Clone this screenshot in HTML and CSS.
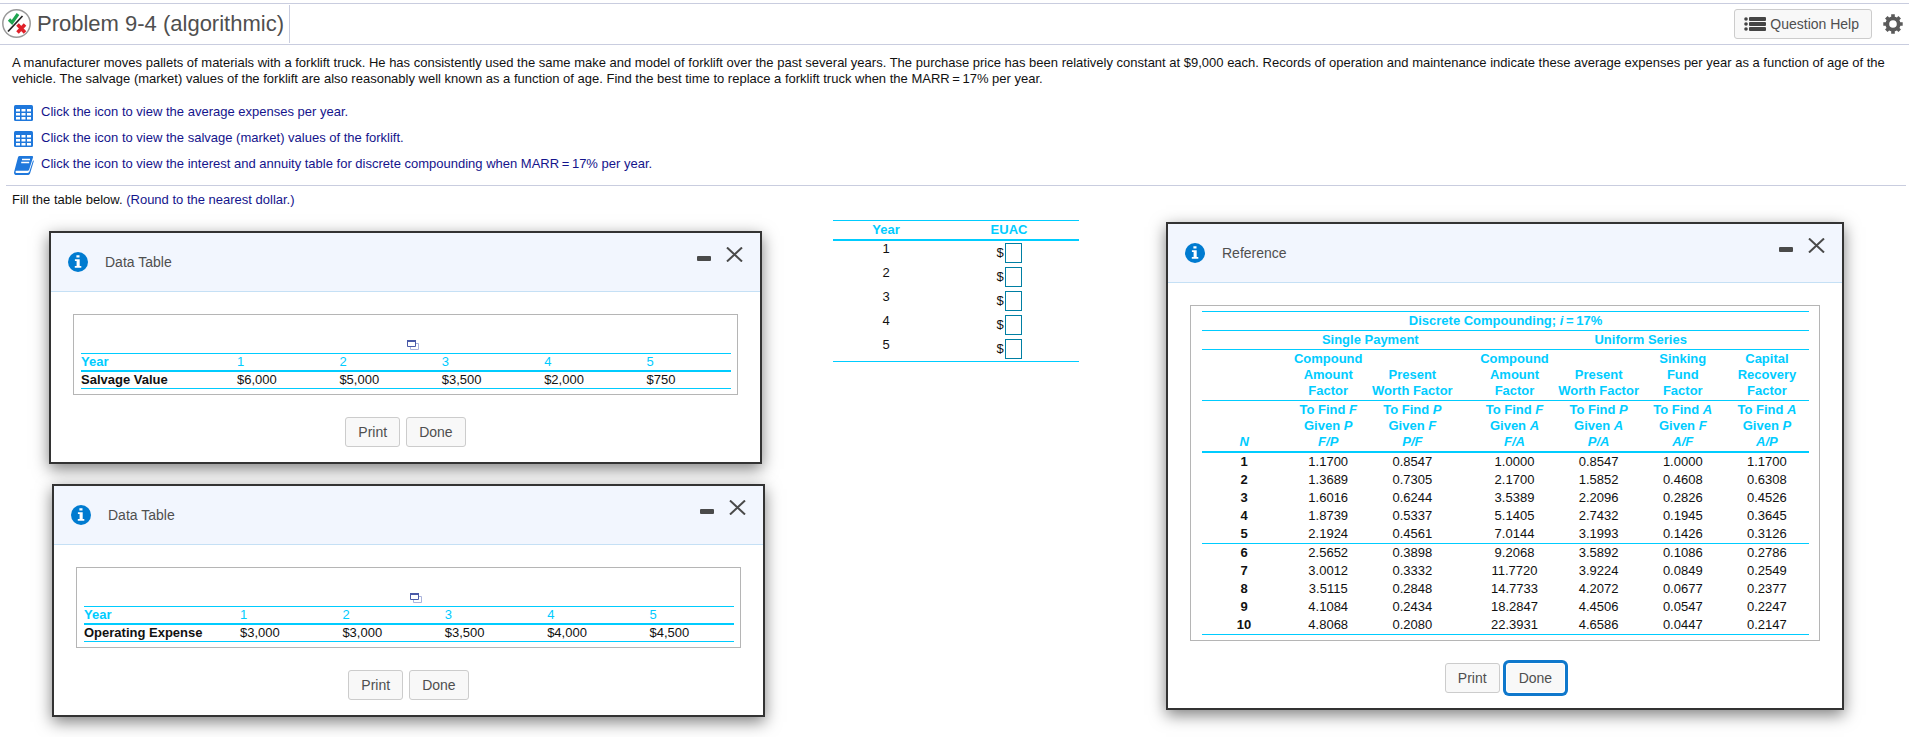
FILE: index.html
```
<!DOCTYPE html>
<html lang="en">
<head>
    <meta charset="UTF-8">
    <meta name="viewport" content="width=device-width, initial-scale=1.0">
    <title>Problem 9-4 (algorithmic)</title>
    <link rel="stylesheet" href="styles.css">
</head>
<body>
    <!-- shared icons -->
    <svg class="sprite" aria-hidden="true">
        <symbol id="icon-info" viewBox="0 0 20 20">
            <circle cx="10" cy="10" r="10" fill="#007bd0"/>
            <path fill="#fff" d="M8.4 3.2h3.1v2.4H8.4zM6.9 7.2h4.8v6.7h1.6v1.9H6.8v-1.9h1.8V9.1H6.9z"/>
        </symbol>
        <symbol id="icon-close" viewBox="0 0 17 15">
            <path d="M1 0.5L16 14.5M16 0.5L1 14.5" stroke="#4a4a4a" stroke-width="2" fill="none"/>
        </symbol>
        <symbol id="icon-popout" viewBox="0 0 12 10">
            <path d="M3.5 3.5h8v6h-8z" fill="#fff" stroke="#aab3dc"/>
            <path d="M0.5 0.5h8v6h-8z" fill="#fff" stroke="#4a5aa8"/>
            <path d="M0 0h9v2H0z" fill="#4a5aa8"/>
        </symbol>
        <symbol id="icon-table" viewBox="0 0 19 16">
            <rect width="19" height="16" rx="1.5" fill="#1f78dc"/>
            <path fill="#fff" d="M2 4h4v2.5H2zM7.5 4h4v2.5h-4zM13 4h4v2.5h-4zM2 8h4v2.5H2zM7.5 8h4v2.5h-4zM13 8h4v2.5h-4zM2 12h4v2.5H2zM7.5 12h4v2.5h-4zM13 12h4v2.5h-4z"/>
        </symbol>
        <symbol id="icon-book" viewBox="0 0 20 19">
            <path fill="#1f78dc" d="M5.6 0h12.2c1 0 1.5.6 1.2 1.5L15.2 13.5c-.3.8-1 1.3-1.8 1.3H2.8c-.8 0-1.3.4-1.3 1.1 0 .8.5 1.1 1.4 1.1h10.6c1 0 1.6-.5 1.900-1.4L19 4.5l.9.3-3.7 12.100c-.4 1.400-1.300 2.100-2.700 2.100H2.500C.9 19-.2 17.800.1 16.100L4 1.200C4.300.4 4.800 0 5.600 0z"/>
            <path d="M8 3.5h8M7.2 6.5h8" stroke="#fff" stroke-width="1.3"/>
        </symbol>
    </svg>

    <header class="topbar">
        <svg class="logo" viewBox="0 0 30 30" aria-hidden="true">
            <circle cx="14.5" cy="14.500" r="13.700" fill="#fff" stroke="#999" stroke-width="1.500"/>
            <path d="M6 22.500L20.500 7" stroke="#222" stroke-width="1.700"/>
            <path d="M7 10.500l3 3 6-8.500" fill="none" stroke="#1fa550" stroke-width="3.200"/>
            <path d="M15.500 15.500l7.500 8M23 15.500l-7.500 8" stroke="#e0202a" stroke-width="3.500"/>
        </svg>
        <h1 class="topbar-title">Problem 9-4 (algorithmic)</h1>
        <button class="btn help-button" type="button">
            <svg width="22" height="14" viewBox="0 0 22 14" fill="#444" aria-hidden="true">
                <circle cx="2" cy="2" r="1.8"/><circle cx="2" cy="7" r="1.8"/><circle cx="2" cy="12" r="1.8"/>
                <rect x="5" width="17" height="4" rx="1"/><rect x="5" y="5" width="17" height="4" rx="1"/><rect x="5" y="10" width="17" height="4" rx="1"/>
            </svg>
            Question Help
        </button>
        <button class="gear-button" type="button" aria-label="Settings">
            <svg width="20" height="20" viewBox="0 0 20 20" aria-hidden="true">
                <circle cx="10" cy="10" r="5.7" fill="none" stroke="#5a5a5a" stroke-width="3.8"/>
                <path stroke="#5a5a5a" stroke-width="3.6" d="M10 0.3v3M10 16.7v3M0.3 10h3M16.7 10h3M3.3 3.3l2 2M14.7 14.7l2 2M3.3 16.7l2-2M14.7 5.3l2-2"/>
            </svg>
        </button>
    </header>

    <section class="problem">
        <p>A manufacturer moves pallets of materials with a forklift truck. He has consistently used the same make and model of forklift over the past several years. The purchase price has been relatively constant at $9,000 each. Records of operation and maintenance indicate these average expenses per year as a function of age of the vehicle. The salvage (market) values of the forklift are also reasonably well known as a function of age. Find the best time to replace a forklift truck when the MARR&thinsp;=&thinsp;17% per year.</p>
        <ul class="resource-list">
            <li><svg class="table-icon" aria-hidden="true"><use href="#icon-table"/></svg><a href="#expenses">Click the icon to view the average expenses per year.</a></li>
            <li><svg class="table-icon" aria-hidden="true"><use href="#icon-table"/></svg><a href="#salvage">Click the icon to view the salvage (market) values of the forklift.</a></li>
            <li><svg class="book-icon" aria-hidden="true"><use href="#icon-book"/></svg><a href="#reference">Click the icon to view the interest and annuity table for discrete compounding when MARR&thinsp;=&thinsp;17% per year.</a></li>
        </ul>
    </section>

    <main class="answer">
        <p class="prompt">Fill the table below. <span class="hint">(Round to the nearest dollar.)</span></p>

        <div class="workspace">
            <div class="data-column">
                <section class="dialog" id="salvage">
                    <div class="dialog-header">
                        <svg class="info-icon" aria-hidden="true"><use href="#icon-info"/></svg>
                        <h2>Data Table</h2>
                        <button class="minimize" type="button" aria-label="Minimize"></button>
                        <button class="close" type="button" aria-label="Close"><svg width="17" height="15"><use href="#icon-close"/></svg></button>
                    </div>
                    <div class="dialog-body">
                        <div class="data-box">
                            <div class="popout"><svg width="12" height="10" aria-hidden="true"><use href="#icon-popout"/></svg></div>
                            <table class="data-table">
                                <thead>
                                    <tr><th class="label">Year</th><th>1</th><th>2</th><th>3</th><th>4</th><th class="last">5</th></tr>
                                </thead>
                                <tbody>
                                    <tr><th>Salvage Value</th><td>$6,000</td><td>$5,000</td><td>$3,500</td><td>$2,000</td><td>$750</td></tr>
                                </tbody>
                            </table>
                        </div>
                        <div class="dialog-buttons">
                            <button class="btn" type="button">Print</button>
                            <button class="btn" type="button">Done</button>
                        </div>
                    </div>
                </section>

                <section class="dialog" id="expenses">
                    <div class="dialog-header">
                        <svg class="info-icon" aria-hidden="true"><use href="#icon-info"/></svg>
                        <h2>Data Table</h2>
                        <button class="minimize" type="button" aria-label="Minimize"></button>
                        <button class="close" type="button" aria-label="Close"><svg width="17" height="15"><use href="#icon-close"/></svg></button>
                    </div>
                    <div class="dialog-body">
                        <div class="data-box">
                            <div class="popout"><svg width="12" height="10" aria-hidden="true"><use href="#icon-popout"/></svg></div>
                            <table class="data-table">
                                <thead>
                                    <tr><th class="label">Year</th><th>1</th><th>2</th><th>3</th><th>4</th><th class="last">5</th></tr>
                                </thead>
                                <tbody>
                                    <tr><th>Operating Expense</th><td>$3,000</td><td>$3,000</td><td>$3,500</td><td>$4,000</td><td>$4,500</td></tr>
                                </tbody>
                            </table>
                        </div>
                        <div class="dialog-buttons">
                            <button class="btn" type="button">Print</button>
                            <button class="btn" type="button">Done</button>
                        </div>
                    </div>
                </section>
            </div>

            <table class="answer-table">
                <thead>
                    <tr><th class="year">Year</th><th>EUAC</th></tr>
                </thead>
                <tbody>
                    <tr><td>1</td><td><label>$<input type="text" aria-label="EUAC year 1"></label></td></tr>
                    <tr><td>2</td><td><label>$<input type="text" aria-label="EUAC year 2"></label></td></tr>
                    <tr><td>3</td><td><label>$<input type="text" aria-label="EUAC year 3"></label></td></tr>
                    <tr><td>4</td><td><label>$<input type="text" aria-label="EUAC year 4"></label></td></tr>
                    <tr><td>5</td><td><label>$<input type="text" aria-label="EUAC year 5"></label></td></tr>
                </tbody>
            </table>

            <section class="dialog reference" id="reference">
                <div class="dialog-header">
                    <svg class="info-icon" aria-hidden="true"><use href="#icon-info"/></svg>
                    <h2>Reference</h2>
                    <button class="minimize" type="button" aria-label="Minimize"></button>
                    <button class="close" type="button" aria-label="Close"><svg width="17" height="15"><use href="#icon-close"/></svg></button>
                </div>
                <div class="dialog-body">
                    <div class="reference-box">
                        <table class="factor-table">
                            <colgroup>
                                <col><col><col><col class="spacer"><col><col><col><col>
                            </colgroup>
                            <thead>
                                <tr><th colspan="8">Discrete Compounding; <i>i</i>&thinsp;=&thinsp;17%</th></tr>
                                <tr><th></th><th colspan="2">Single Payment</th><th></th><th colspan="4">Uniform Series</th></tr>
                                <tr>
                                    <th></th>
                                    <th>Compound<br>Amount<br>Factor</th>
                                    <th>Present<br>Worth Factor</th>
                                    <th></th>
                                    <th>Compound<br>Amount<br>Factor</th>
                                    <th>Present<br>Worth Factor</th>
                                    <th>Sinking<br>Fund<br>Factor</th>
                                    <th>Capital<br>Recovery<br>Factor</th>
                                </tr>
                                <tr>
                                    <th><i>N</i></th>
                                    <th>To Find <i>F</i><br>Given <i>P</i><br><i>F/P</i></th>
                                    <th>To Find <i>P</i><br>Given <i>F</i><br><i>P/F</i></th>
                                    <th></th>
                                    <th>To Find <i>F</i><br>Given <i>A</i><br><i>F/A</i></th>
                                    <th>To Find <i>P</i><br>Given <i>A</i><br><i>P/A</i></th>
                                    <th>To Find <i>A</i><br>Given <i>F</i><br><i>A/F</i></th>
                                    <th>To Find <i>A</i><br>Given <i>P</i><br><i>A/P</i></th>
                                </tr>
                            </thead>
                            <tbody>
                                <tr><th>1</th><td>1.1700</td><td>0.8547</td><td></td><td>1.0000</td><td>0.8547</td><td>1.0000</td><td>1.1700</td></tr>
                                <tr><th>2</th><td>1.3689</td><td>0.7305</td><td></td><td>2.1700</td><td>1.5852</td><td>0.4608</td><td>0.6308</td></tr>
                                <tr><th>3</th><td>1.6016</td><td>0.6244</td><td></td><td>3.5389</td><td>2.2096</td><td>0.2826</td><td>0.4526</td></tr>
                                <tr><th>4</th><td>1.8739</td><td>0.5337</td><td></td><td>5.1405</td><td>2.7432</td><td>0.1945</td><td>0.3645</td></tr>
                                <tr><th>5</th><td>2.1924</td><td>0.4561</td><td></td><td>7.0144</td><td>3.1993</td><td>0.1426</td><td>0.3126</td></tr>
                            </tbody>
                            <tbody>
                                <tr><th>6</th><td>2.5652</td><td>0.3898</td><td></td><td>9.2068</td><td>3.5892</td><td>0.1086</td><td>0.2786</td></tr>
                                <tr><th>7</th><td>3.0012</td><td>0.3332</td><td></td><td>11.7720</td><td>3.9224</td><td>0.0849</td><td>0.2549</td></tr>
                                <tr><th>8</th><td>3.5115</td><td>0.2848</td><td></td><td>14.7733</td><td>4.2072</td><td>0.0677</td><td>0.2377</td></tr>
                                <tr><th>9</th><td>4.1084</td><td>0.2434</td><td></td><td>18.2847</td><td>4.4506</td><td>0.0547</td><td>0.2247</td></tr>
                                <tr><th>10</th><td>4.8068</td><td>0.2080</td><td></td><td>22.3931</td><td>4.6586</td><td>0.0447</td><td>0.2147</td></tr>
                            </tbody>
                        </table>
                    </div>
                    <div class="dialog-buttons">
                        <button class="btn" type="button">Print</button>
                        <button class="btn active" type="button">Done</button>
                    </div>
                </div>
            </section>
        </div>
    </main>
</body>
</html>
```
FILE: styles.css
```
:root {
    --cyan: #00ccff;
    --rule: #c9cddf;
    --link: #14148c;
    --text: #111;
    --gray: #4f4f4f;
}

* {
    box-sizing: border-box;
    margin: 0;
    padding: 0;
}

body {
    background-color: #fff;
    color: var(--text);
    font-family: Arial, "Liberation Sans", sans-serif;
    font-size: 13px;
    line-height: 16px;
    padding-top: 3px;
}

.sprite {
    position: absolute;
    width: 0;
    height: 0;
}

/* top bar */
.topbar {
    display: flex;
    align-items: center;
    height: 42px;
    padding: 0 6px 0 2px;
    border-top: 1px solid var(--rule);
    border-bottom: 1px solid var(--rule);
}

.logo {
    width: 30px;
    height: 30px;
    margin-right: 5px;
}

.topbar-title {
    margin-right: auto;
    padding-right: 5px;
    border-right: 1px solid var(--rule);
    color: var(--gray);
    font-size: 22px;
    font-weight: normal;
    line-height: 38px;
}

.btn {
    height: 30px;
    padding: 0 12px;
    border: 1px solid #ccc;
    border-radius: 3px;
    background-color: #f8f8f8;
    color: var(--gray);
    font-family: inherit;
    font-size: 14px;
    cursor: pointer;
}

.help-button {
    display: flex;
    align-items: center;
    gap: 4px;
    padding: 0 12px 0 9px;
}

.gear-button {
    width: 20px;
    height: 20px;
    margin-left: 11px;
    border: 0;
    background: none;
    cursor: pointer;
}

.gear-button svg {
    display: block;
}

/* problem statement */
.problem {
    margin: 0 3px 0 6px;
    padding: 10px 6px 8px;
    border-bottom: 1px solid var(--rule);
}

.resource-list {
    margin-top: 12px;
    list-style: none;
}

.resource-list li {
    display: flex;
    align-items: center;
    gap: 8px;
    height: 26px;
    padding-left: 2px;
}

.resource-list a {
    color: var(--link);
    text-decoration: none;
}

.table-icon {
    width: 19px;
    height: 16px;
    margin-top: 2px;
}

.book-icon {
    width: 20px;
    height: 19px;
    margin-top: 2px;
    margin-right: -1px;
}

.prompt {
    padding: 6px 12px 12px;
}

.hint {
    color: var(--link);
}

/* windows and answer table */
.workspace {
    display: flex;
    align-items: flex-start;
    padding: 0 65px 20px 49px;
}

.data-column {
    flex: 716 1 0;
    display: flex;
    flex-direction: column;
    gap: 20px;
    padding-top: 11px;
}

.data-column .dialog:first-child {
    margin-right: 3px;
}

.data-column .dialog:last-child {
    margin-left: 3px;
}

.reference {
    flex: 674 1 0;
    margin-top: 2px;
}

.dialog {
    border: 2px solid #333;
    background-color: #fff;
    box-shadow: 0 5px 15px rgba(0, 0, 0, 0.5);
}

.dialog-header {
    display: flex;
    align-items: center;
    height: 59px;
    padding: 0 17px;
    border-bottom: 1px solid #c5e0f5;
    background-color: #f2f6fe;
}

.info-icon {
    width: 20px;
    height: 20px;
    margin-right: 17px;
}

.dialog-header h2 {
    margin-right: auto;
    color: var(--gray);
    font-size: 14px;
    font-weight: normal;
}

.minimize {
    width: 14px;
    height: 5px;
    margin: 0 15px 7px 0;
    border: 0;
    border-radius: 1px;
    background-color: #4a4a4a;
    cursor: pointer;
}

.close {
    height: 15px;
    margin-bottom: 15px;
    border: 0;
    background: none;
    cursor: pointer;
}

.close svg {
    display: block;
}

.dialog-body {
    padding: 22px 22px 15px;
}

.dialog-buttons {
    display: flex;
    justify-content: center;
    gap: 6px;
    margin-top: 22px;
}

.btn.active {
    border-color: #fff;
    box-shadow: 0 0 0 3px #0f78cc;
}

.data-box {
    padding: 25px 6px 5px 7px;
    border: 1px solid #b5b5b5;
}

.popout {
    display: flex;
    justify-content: center;
    padding: 0 0 3px 14px;
}

.reference-box {
    padding: 5px 10px 5px 11px;
    border: 1px solid #b5b5b5;
}

table {
    width: 100%;
    border-spacing: 0;
    table-layout: fixed;
}

thead th {
    color: var(--cyan);
}

.data-table th,
.data-table td {
    text-align: left;
    white-space: nowrap;
}

.data-table thead th {
    border-top: 1px solid var(--cyan);
    border-bottom: 2px solid var(--cyan);
    font-weight: normal;
}

.data-table thead .label {
    width: 24%;
    font-weight: bold;
}

.data-table thead .last {
    width: 13%;
}

.data-table tbody th,
.data-table tbody td {
    border-bottom: 1px solid var(--cyan);
}

.answer-table {
    flex: none;
    width: 246px;
    margin: 0 87px 0 68px;
    text-align: center;
}

.answer-table thead th {
    height: 21px;
    border-top: 1px solid var(--cyan);
    border-bottom: 2px solid var(--cyan);
}

.answer-table .year {
    width: 106px;
}

.answer-table td {
    height: 24px;
    vertical-align: top;
}

.answer-table tr:last-child td {
    height: 25px;
    border-bottom: 1px solid var(--cyan);
}

.answer-table label {
    display: flex;
    justify-content: center;
    align-items: center;
    gap: 1px;
    padding-top: 2px;
}

.answer-table input {
    width: 17px;
    height: 20px;
    border: 1px solid #007fa3;
    background-color: #fff;
    font-size: 13px;
}

.factor-table {
    text-align: center;
}

.factor-table .spacer {
    width: 18px;
}

.factor-table thead th {
    padding: 1px 0;
    border-top: 1px solid var(--cyan);
    vertical-align: bottom;
    white-space: nowrap;
}

.factor-table thead tr:last-child th {
    border-bottom: 2px solid var(--cyan);
}

.factor-table tbody th,
.factor-table tbody td {
    height: 18px;
}

.factor-table tbody tr:last-child th,
.factor-table tbody tr:last-child td {
    height: 19px;
    border-bottom: 1px solid var(--cyan);
}
```
